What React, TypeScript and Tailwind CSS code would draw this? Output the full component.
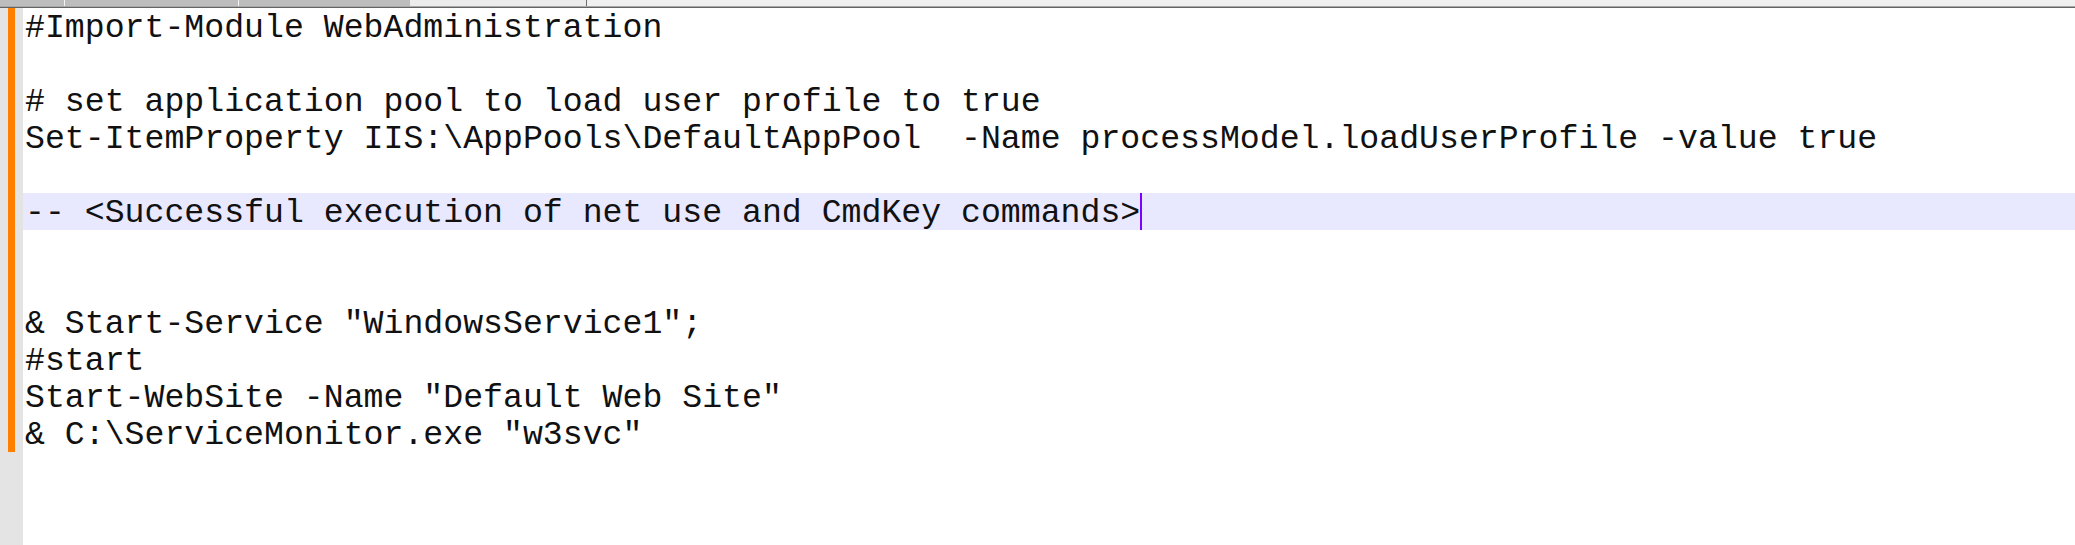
import React from "react";

const lines: string[] = [
  "#Import-Module WebAdministration",
  "",
  "# set application pool to load user profile to true",
  "Set-ItemProperty IIS:\\AppPools\\DefaultAppPool  -Name processModel.loadUserProfile -value true",
  "",
  "-- <Successful execution of net use and CmdKey commands>",
  "",
  "",
  '& Start-Service "WindowsService1";',
  "#start",
  'Start-WebSite -Name "Default Web Site"',
  '& C:\\ServiceMonitor.exe "w3svc"',
];

export default function App() {
  return (
    <div className="w-[2075px] h-[545px] bg-white overflow-hidden flex flex-col">
      {/* tab strip remnant */}
      <div className="flex h-[6px] shrink-0">
        <div className="w-[65px] bg-[#bdbdbd] border-r border-[#f4f4f4]" />
        <div className="w-[174px] bg-[#bdbdbd] border-r border-[#f4f4f4]" />
        <div className="w-[171px] bg-[#bdbdbd]" />
        <div className="w-[177px] bg-[#ececec] border-r border-[#6e6e6e]" />
        <div className="flex-1 bg-[#f0f0f0]" />
      </div>
      <div className="h-[1px] bg-[#a8a8a8] shrink-0" />
      <div className="h-[1px] bg-[#646464] shrink-0" />
      <div className="flex flex-1">
        {/* gutter */}
        <div className="w-[23px] shrink-0 bg-[#e4e4e4] pl-[8px]">
          <div className="w-[7px] h-[444px] bg-[#ff8000]" />
        </div>
        {/* editor */}
        <div className="flex-1 flex flex-col font-['Liberation_Mono','Courier_New',monospace] text-[33.2px] text-[#111]">
          {lines.map((t, i) => (
            <div
              key={i}
              className={
                i === 5
                  ? "h-[37px] leading-[37px] pl-[2px] whitespace-pre bg-[#e8e8ff] relative"
                  : "h-[37px] leading-[37px] pl-[2px] whitespace-pre"
              }
            >
              <span className="relative top-[2px]">{t}</span>
              {i === 5 && (
                <span className="absolute left-[1117px] top-0 h-[37px] w-[2px] bg-[#8000ff]" />
              )}
            </div>
          ))}
        </div>
      </div>
    </div>
  );
}
